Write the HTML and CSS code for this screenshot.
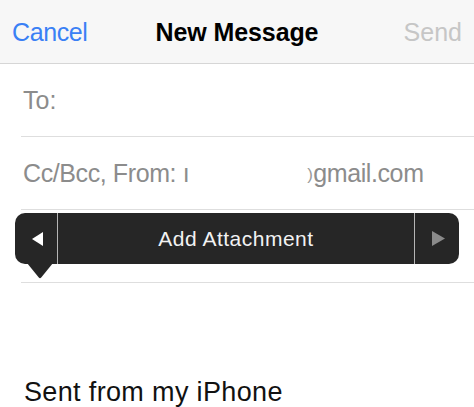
FILE: index.html
```html
<!DOCTYPE html>
<html>
<head>
<meta charset="utf-8">
<link rel="stylesheet" href="styles.css">
</head>
<body>
<div class="screen">
  <header class="nav">
    <span class="nav-cancel">Cancel</span>
    <span class="nav-title">New Message</span>
    <span class="nav-send">Send</span>
  </header>
  <div class="row"><span class="label">To:</span></div>
  <div class="row cc">
    <span class="label">Cc/Bcc, From: ı</span><span class="gap"></span><span class="part">)</span><span class="label">gmail.com</span>
  </div>
  <div class="row"></div>
  <div class="body-text">Sent from my iPhone</div>

  <div class="menu">
    <div class="menu-seg menu-left">
      <svg width="11" height="14" viewBox="0 0 11 14"><polygon points="11,0 11,14 0,7" fill="#ffffff"/></svg>
    </div>
    <div class="menu-seg menu-mid">Add Attachment</div>
    <div class="menu-seg menu-right">
      <svg width="13" height="15" viewBox="0 0 13 15"><polygon points="0,0 13,7.5 0,15" fill="#8a8a8a"/></svg>
    </div>
    <svg class="menu-tip" width="26" height="16" viewBox="0 0 26 16"><path d="M0 0 L26 0 L14.2 14.6 Q13 16 11.8 14.6 Z" fill="#262626"/></svg>
  </div>
</div>
</body>
</html>
```

FILE: styles.css
```css
* { box-sizing: border-box; }
html, body {
  margin: 0;
  padding: 0;
  background: #ffffff;
}
body {
  font-family: "Liberation Sans", Arial, sans-serif;
  width: 474px;
  height: 407px;
  overflow: hidden;
}
.screen {
  position: relative;
  width: 474px;
  height: 407px;
}
.nav {
  height: 64px;
  background: #f7f7f7;
  border-bottom: 1px solid #d6d6d6;
  display: grid;
  grid-template-columns: 1fr auto 1fr;
  align-items: center;
  padding: 0 12px 0 12px;
  font-size: 25px;
  line-height: 30px;
}
.nav-cancel {
  color: #3a80f5;
  justify-self: start;
  letter-spacing: -0.4px;
}
.nav-title {
  color: #000000;
  font-weight: bold;
  letter-spacing: -0.1px;
}
.nav-send {
  color: #c6c6c6;
  justify-self: end;
}
.row {
  height: 73px;
  margin-left: 21px;
  padding-left: 2px;
  border-bottom: 1px solid #dedede;
  display: flex;
  align-items: center;
  font-size: 25px;
  color: #8c8c8c;
  white-space: pre;
}
.label {
  line-height: 30px;
}
.cc .label {
  letter-spacing: -0.4px;
}
.gap {
  width: 118px;
  flex: none;
}
.part {
  font-size: 17px;
  line-height: 30px;
  padding-top: 3px;
  width: 6px;
  flex: none;
  color: #9a9a9a;
}
.body-text {
  margin-top: 93px;
  padding-left: 24px;
  font-size: 27px;
  line-height: 32px;
  color: #111111;
  letter-spacing: 0.35px;
}
.menu {
  position: absolute;
  top: 213px;
  left: 15px;
  width: 444px;
  height: 51px;
  background: #262626;
  border-radius: 10px;
  display: flex;
}
.menu-seg {
  display: flex;
  align-items: center;
  justify-content: center;
}
.menu-left {
  width: 43px;
  border-right: 1px solid #b5b5b5;
  padding-left: 2px;
}
.menu-mid {
  flex: 1;
  color: #f2f2f2;
  font-size: 21px;
  line-height: 26px;
  letter-spacing: 0.5px;
}
.menu-right {
  width: 45px;
  border-left: 1px solid #b5b5b5;
  padding-left: 2px;
}
.menu-tip {
  position: absolute;
  left: 12px;
  top: 50px;
}
```
